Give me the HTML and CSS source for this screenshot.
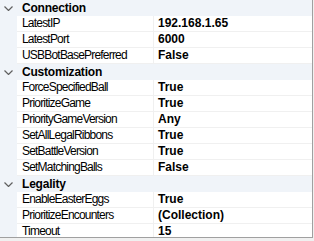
FILE: index.html
```html
<!DOCTYPE html>
<html lang="en">
<head>
    <meta charset="UTF-8">
    <meta name="viewport" content="width=device-width, initial-scale=1.0">
    <title>Property Grid</title>
    <link rel="stylesheet" href="styles.css">
</head>
<body>

    <div class="grid">
        <div class="cat">
            <span class="chev"><svg width="9" height="5" viewBox="0 0 9 5"><polyline points="0.5,0.5 4.5,4.5 8.5,0.5" fill="none" stroke="#606060" stroke-width="1.2"/></svg></span>
            <span class="cat-name">Connection</span>
        </div>
        <div class="row"><span class="margin"></span><span class="name">LatestIP</span><span class="value">192.168.1.65</span></div>
        <div class="row"><span class="margin"></span><span class="name">LatestPort</span><span class="value">6000</span></div>
        <div class="row"><span class="margin"></span><span class="name">USBBotBasePreferred</span><span class="value">False</span></div>

        <div class="cat">
            <span class="chev"><svg width="9" height="5" viewBox="0 0 9 5"><polyline points="0.5,0.5 4.5,4.5 8.5,0.5" fill="none" stroke="#606060" stroke-width="1.2"/></svg></span>
            <span class="cat-name">Customization</span>
        </div>
        <div class="row"><span class="margin"></span><span class="name">ForceSpecifiedBall</span><span class="value">True</span></div>
        <div class="row"><span class="margin"></span><span class="name">PrioritizeGame</span><span class="value">True</span></div>
        <div class="row"><span class="margin"></span><span class="name">PriorityGameVersion</span><span class="value">Any</span></div>
        <div class="row"><span class="margin"></span><span class="name">SetAllLegalRibbons</span><span class="value">True</span></div>
        <div class="row"><span class="margin"></span><span class="name">SetBattleVersion</span><span class="value">True</span></div>
        <div class="row"><span class="margin"></span><span class="name">SetMatchingBalls</span><span class="value">False</span></div>

        <div class="cat">
            <span class="chev"><svg width="9" height="5" viewBox="0 0 9 5"><polyline points="0.5,0.5 4.5,4.5 8.5,0.5" fill="none" stroke="#606060" stroke-width="1.2"/></svg></span>
            <span class="cat-name">Legality</span>
        </div>
        <div class="row"><span class="margin"></span><span class="name">EnableEasterEggs</span><span class="value">True</span></div>
        <div class="row"><span class="margin"></span><span class="name">PrioritizeEncounters</span><span class="value">(Collection)</span></div>
        <div class="row"><span class="margin"></span><span class="name">Timeout</span><span class="value">15</span></div>
    </div>

</body>
</html>
```

FILE: styles.css
```css
body {
    margin: 0;
    background-color: #f0f0f0;
    font-family: "Liberation Sans", Arial, sans-serif;
    color: #000;
}
.grid {
    width: 312px;
    height: 237px;
    overflow: hidden;
    background-color: #ffffff;
    border-right: 1px solid #a0a0a0;
    border-bottom: 1px solid #a0a0a0;
}
.cat {
    display: flex;
    align-items: center;
    height: 16px;
    background-color: #f0f4f9;
}
.chev {
    width: 22px;
    display: flex;
    justify-content: center;
    padding-right: 5px;
    box-sizing: border-box;
}
.chev svg {
    display: block;
}
.cat-name {
    font-weight: bold;
    font-size: 12px;
    letter-spacing: -0.2px;
}
.row {
    display: grid;
    grid-template-columns: 17px 137px 1fr;
    height: 16px;
}
.margin {
    background-color: #f0f4f9;
}
.name, .value {
    border-bottom: 1px solid #f0f0f0;
    line-height: 15px;
    white-space: nowrap;
    overflow: hidden;
}
.name {
    font-size: 12px;
    letter-spacing: -0.8px;
    padding-left: 5px;
    border-right: 1px solid #f0f0f0;
}
.value {
    font-size: 12px;
    font-weight: bold;
    padding-left: 4px;
}
```
